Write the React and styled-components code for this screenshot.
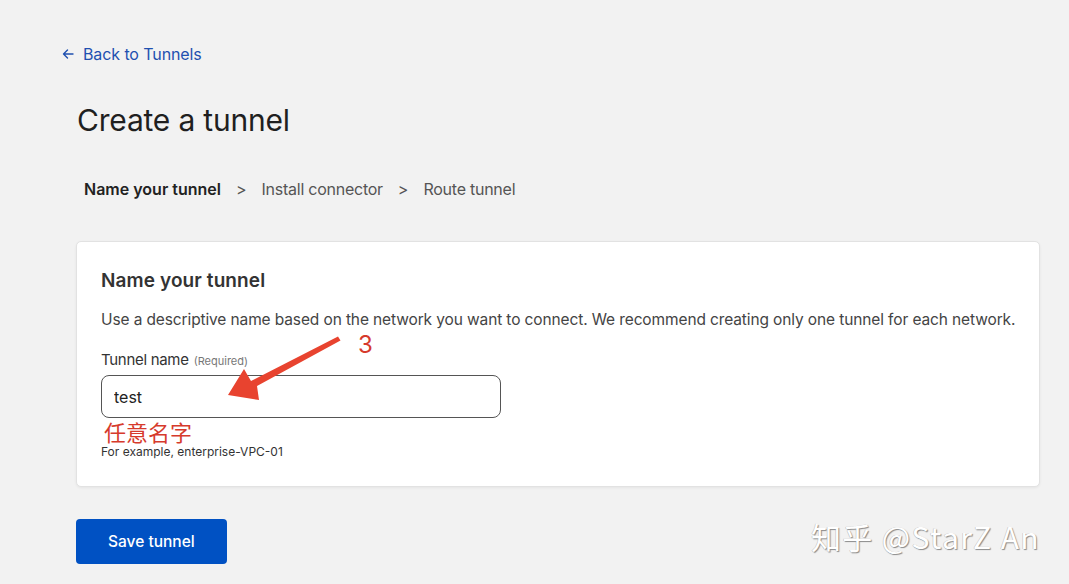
import styled, { createGlobalStyle } from "styled-components";

const GlobalStyle = createGlobalStyle`
  html, body {
    margin: 0;
    padding: 0;
    background: #f2f2f2;
    font-family: Inter, "Noto Sans", "Noto Sans CJK SC", sans-serif;
    color: #222;
  }
`;

const Page = styled.div`
  position: relative;
  min-height: 584px;
  padding: 43px 29px 0 62px;
  box-sizing: border-box;
  overflow: hidden;
`;

const BackLink = styled.a`
  display: inline-flex;
  align-items: center;
  gap: 9px;
  color: #1f50b0;
  font-size: 16px;
  line-height: 22px;
  letter-spacing: -0.1px;
  text-decoration: none;
  cursor: pointer;
`;

const Title = styled.h1`
  margin: 35px 0 0 15px;
  font-size: 30px;
  font-weight: 400;
  line-height: 40px;
  color: #1f1f1f;
  letter-spacing: -0.2px;
`;

const Steps = styled.ol`
  display: flex;
  align-items: center;
  list-style: none;
  margin: 38px 0 0 22px;
  padding: 0;
  font-size: 16px;
  line-height: 22px;
`;

const Step = styled.li`
  color: ${({ $active }) => ($active ? "#222" : "#555")};
  font-weight: ${({ $active }) => ($active ? 600 : 400)};
  letter-spacing: ${({ $active }) => ($active ? "0" : "-0.25px")};
`;

const Sep = styled.li`
  color: #555;
  margin: 0 15px;
`;

const Card = styled.section`
  margin: 41px 0 0 14px;
  background: #fff;
  border: 1px solid #e2e2e2;
  border-radius: 5px;
  box-shadow: 0 1px 3px rgba(0, 0, 0, 0.06);
  padding: 26px 24px 26px 24px;
`;

const CardTitle = styled.h2`
  margin: 0;
  font-size: 19px;
  font-weight: 600;
  line-height: 26px;
  color: #333;
  letter-spacing: 0.1px;
`;

const Description = styled.p`
  margin: 15px 0 0;
  font-size: 15.5px;
  line-height: 22px;
  letter-spacing: -0.12px;
  color: #444;
  white-space: nowrap;
`;

const Field = styled.div`
  position: relative;
  margin-top: 19px;
  display: flex;
  flex-direction: column;
`;

const Label = styled.label`
  font-size: 15px;
  line-height: 20px;
  color: #333;
  letter-spacing: -0.3px;

  span {
    font-size: 11px;
    color: #777;
    margin-left: 5px;
    letter-spacing: 0;
  }
`;

const Input = styled.input`
  margin-top: 4px;
  width: 400px;
  height: 43px;
  box-sizing: border-box;
  border: 1px solid #555;
  border-radius: 8px;
  padding: 0 12px;
  font-family: inherit;
  font-size: 16px;
  color: #222;
  outline: none;
`;

const Note = styled.div`
  font-family: "Noto Sans CJK SC", sans-serif;
  color: #d63a2c;
  font-size: 22px;
  line-height: 26px;
  margin: 0 0 0 3px;
`;

const Help = styled.div`
  font-size: 12px;
  line-height: 16px;
  color: #333;
`;

const Annotation = styled.svg`
  position: absolute;
  left: 120px;
  top: -14px;
  pointer-events: none;
`;

const Marker = styled.span`
  position: absolute;
  left: 257px;
  top: -19px;
  color: #d63a2c;
  font-size: 24px;
  line-height: 28px;
`;

const SaveButton = styled.button`
  margin: 32px 0 0 14px;
  height: 45px;
  padding: 0 32px;
  background: #0051c3;
  color: #fff;
  border: none;
  border-radius: 4px;
  font-family: inherit;
  font-size: 15.5px;
  font-weight: 500;
  cursor: pointer;
`;

const Watermark = styled.div`
  position: absolute;
  right: 29px;
  bottom: 26px;
  font-family: "Noto Sans CJK SC", sans-serif;
  font-size: 30px;
  color: #fff;
  letter-spacing: 1.4px;
  text-shadow: 1px 1px 1px #8a8a8a, -0.5px -0.5px 0 #bbb;
  pointer-events: none;
`;

const ArrowLeft = () => (
  <svg width="12" height="12" viewBox="0 0 12 12" fill="none">
    <path d="M11 6H1.5M5.5 2L1.5 6l4 4" stroke="#1f50b0" strokeWidth="1.4" strokeLinecap="round" strokeLinejoin="round" />
  </svg>
);

export default function App() {
  return (
    <>
      <GlobalStyle />
      <Page>
        <BackLink>
          <ArrowLeft />
          Back to Tunnels
        </BackLink>
        <Title>Create a tunnel</Title>
        <Steps>
          <Step $active>Name your tunnel</Step>
          <Sep>&gt;</Sep>
          <Step>Install connector</Step>
          <Sep>&gt;</Sep>
          <Step>Route tunnel</Step>
        </Steps>
        <Card>
          <CardTitle>Name your tunnel</CardTitle>
          <Description>
            Use a descriptive name based on the network you want to connect. We recommend creating only one tunnel for each network.
          </Description>
          <Field>
            <Label>
              Tunnel name<span>(Required)</span>
            </Label>
            <Input defaultValue="test" />
            <Note>任意名字</Note>
            <Help>For example, enterprise-VPC-01</Help>
            <Annotation width="130" height="80" viewBox="0 0 130 80">
              <path
                d="M117 0.5 L119.5 4.5 L36 50 L38 64 L7 59 L23 33 L30 45 Z"
                fill="#e8432f"
              />
            </Annotation>
            <Marker>3</Marker>
          </Field>
        </Card>
        <SaveButton>Save tunnel</SaveButton>
        <Watermark>知乎 @StarZ An</Watermark>
      </Page>
    </>
  );
}
